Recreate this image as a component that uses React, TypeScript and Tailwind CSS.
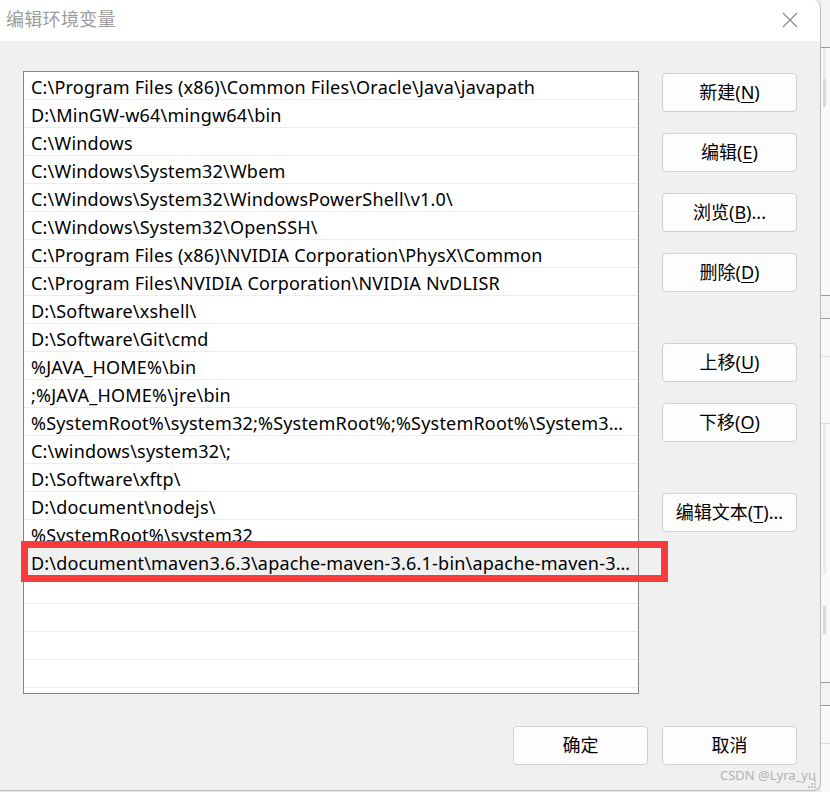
import React from 'react';

const paths = [
  'C:\\Program Files (x86)\\Common Files\\Oracle\\Java\\javapath',
  'D:\\MinGW-w64\\mingw64\\bin',
  'C:\\Windows',
  'C:\\Windows\\System32\\Wbem',
  'C:\\Windows\\System32\\WindowsPowerShell\\v1.0\\',
  'C:\\Windows\\System32\\OpenSSH\\',
  'C:\\Program Files (x86)\\NVIDIA Corporation\\PhysX\\Common',
  'C:\\Program Files\\NVIDIA Corporation\\NVIDIA NvDLISR',
  'D:\\Software\\xshell\\',
  'D:\\Software\\Git\\cmd',
  '%JAVA_HOME%\\bin',
  ';%JAVA_HOME%\\jre\\bin',
  '%SystemRoot%\\system32;%SystemRoot%;%SystemRoot%\\System32\\Wbem;%SYSTEMROOT%\\System32\\WindowsPowerShell\\v1.0\\',
  'C:\\windows\\system32\\;',
  'D:\\Software\\xftp\\',
  'D:\\document\\nodejs\\',
  '%SystemRoot%\\system32',
  'D:\\document\\maven3.6.3\\apache-maven-3.6.1-bin\\apache-maven-3.6.1\\bin',
];

const SELECTED = 17;

function Btn({ label, mn, tail = '', className = '' }: { label: string; mn?: string; tail?: string; className?: string }) {
  return (
    <button className={`w-[135px] h-[39px] bg-[#fdfdfd] border border-[#d0d0d0] rounded-[4px] text-[18px] text-black flex items-center justify-center ${className}`}>
      {label}
      {mn && (
        <>
          (<span className="underline underline-offset-[3px]">{mn}</span>){tail}
        </>
      )}
    </button>
  );
}

export default function App() {
  const rows = [...paths, '', '', '', '', ''];
  return (
    <div
      className="flex w-[830px] h-[792px] bg-[#e6e6e6] overflow-hidden"
      style={{ fontFamily: '"Noto Sans", "Noto Sans CJK SC", sans-serif' }}
    >
      {/* dialog */}
      <div className="relative flex flex-col w-[821px] h-[791px] bg-[#f0f0f0] border-r border-b border-[#b9b9b9] rounded-tr-[8px] rounded-br-[8px] overflow-hidden">
        {/* title bar */}
        <div className="flex items-center justify-between h-[41px] bg-white pl-[6px] pr-[22px] shrink-0">
          <span className="text-[18px] text-[#9c9c9c] leading-none tracking-[0.3px] mb-[4px]">编辑环境变量</span>
          <svg width="16" height="16" viewBox="0 0 16 16" className="mb-[2px]">
            <path d="M1 1 L15 15 M15 1 L1 15" stroke="#8a8a8a" strokeWidth="1.2" fill="none" />
          </svg>
        </div>

        <div className="flex pt-[30px] pl-[23px]">
          {/* list */}
          <div className="w-[616px] h-[623px] bg-white border border-[#868686] overflow-hidden">
            {rows.map((p, i) => (
              <div
                key={i}
                className={`h-[28px] border-b border-[#ededed] pl-[7px] pr-[8px] pt-[3px] flex items-center text-[18px] tracking-[0.2px] text-black ${i === SELECTED ? 'bg-[#f0f0f0]' : ''}`}
              >
                <span className="truncate whitespace-nowrap leading-[24px]">{p}</span>
              </div>
            ))}
          </div>

          {/* side buttons */}
          <div className="flex flex-col ml-[23px] mt-[2px]">
            <Btn label="新建" mn="N" />
            <Btn label="编辑" mn="E" className="mt-[21px]" />
            <Btn label="浏览" mn="B" tail="..." className="mt-[21px]" />
            <Btn label="删除" mn="D" className="mt-[21px]" />
            <Btn label="上移" mn="U" className="mt-[51px]" />
            <Btn label="下移" mn="O" className="mt-[21px]" />
            <Btn label="编辑文本" mn="T" tail="..." className="mt-[51px]" />
          </div>
        </div>

        {/* bottom buttons */}
        <div className="flex justify-end gap-[14px] pr-[23px] mt-[32px]">
          <Btn label="确定" />
          <Btn label="取消" />
        </div>

        {/* annotation box */}
        <div className="absolute left-[21px] top-[541px] w-[647px] h-[41px] border-[7px] border-[#f83b3b]" />

        {/* watermark */}
        <span className="absolute right-[4px] bottom-[8px] text-[13px] text-[#b3b3b3] leading-none">CSDN @Lyra_yu</span>

        {/* resize grip */}
        <svg width="10" height="10" viewBox="0 0 10 10" className="absolute right-[3px] bottom-[1px]">
          <rect x="7" y="1" width="2" height="2" fill="#c4c4c4" />
          <rect x="4" y="4" width="2" height="2" fill="#c4c4c4" />
          <rect x="7" y="4" width="2" height="2" fill="#c4c4c4" />
          <rect x="1" y="7" width="2" height="2" fill="#c4c4c4" />
          <rect x="4" y="7" width="2" height="2" fill="#c4c4c4" />
          <rect x="7" y="7" width="2" height="2" fill="#c4c4c4" />
        </svg>
      </div>

      {/* window behind */}
      <div className="flex flex-col w-[9px] bg-[#f9f9f9]">
        <div className="h-[48px] bg-[#f3f3f3] border-b border-[#9a9a9a]" />
        <div className="h-[247px] flex">
          <div className="w-[2px]" />
          <div className="w-[3px] flex flex-col">
            <div className="h-[31px] bg-[#ececec]" />
            <div className="h-[28px] bg-[#d8d8d8]" />
            <div className="flex-1" />
          </div>
        </div>
        <div className="h-[24px] border-t border-b border-[#9a9a9a] bg-[#f3f3f3]" />
        <div className="h-[38px] border-b border-[#dcdcdc]" />
        <div className="h-[67px] border-b border-[#dcdcdc]" />
        <div className="h-[258px] flex">
          <div className="w-[2px]" />
          <div className="w-[3px] flex flex-col">
            <div className="h-[150px] bg-[#ececec]" />
            <div className="h-[32px]" />
            <div className="h-[28px] bg-[#d8d8d8]" />
          </div>
        </div>
        <div className="h-[24px] border-t border-b border-[#9a9a9a] bg-[#f3f3f3]" />
        <div className="h-[38px] border-b border-[#dcdcdc]" />
        <div className="flex-1" />
      </div>
    </div>
  );
}
